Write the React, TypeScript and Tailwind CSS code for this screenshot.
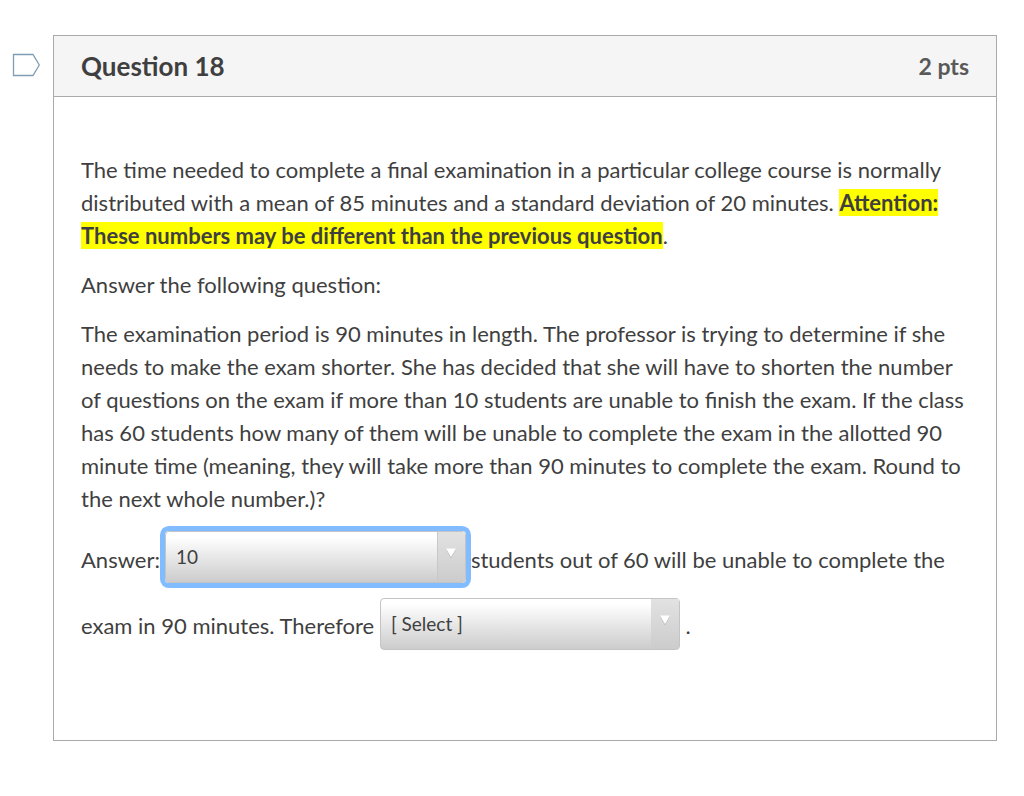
function QuestionSelect({ label, value, focused = false }: { label: string; value: string; focused?: boolean }) {
  return (
    <span
      className={
        focused
          ? 'relative inline-block w-[301px] h-[52px] rounded-sm align-middle mb-2.5 mx-[5px] leading-6 ring-5 ring-[#80bcff]'
          : 'relative inline-block w-[300px] h-[52px] rounded-sm align-middle mb-2.5 leading-6'
      }
    >
      <select
        aria-label={label}
        defaultValue={value}
        className="block w-full h-full appearance-none rounded-sm border border-[#c4c4c4] bg-linear-to-b from-white from-10% to-[#cccccc] pl-[10px] pr-10 text-[19px] leading-6 text-[#3f3f3f] outline-none"
      >
        <option>[ Select ]</option>
        <option>10</option>
      </select>
      <span
        className={
          focused
            ? 'pointer-events-none absolute inset-y-px right-px w-7 border-l border-[#c8c8c8] bg-linear-to-b from-[#e2e2e2] to-[#cccccc] flex justify-center pt-4'
            : 'pointer-events-none absolute inset-y-px right-px w-7 bg-linear-to-b from-[#e2e2e2] to-[#cccccc] flex justify-center pt-4'
        }
      >
        <svg width="10" height="10" viewBox="0 0 10 10" aria-hidden="true">
          <path d="M0.5 1.5L5 9.8L9.5 1.5" fill="none" stroke="#b4b4b4" strokeWidth="0.7" />
          <path d="M0 0.5H10L5 9Z" fill="#fff" />
        </svg>
      </span>
    </span>
  );
}

export default function App() {
  return (
    <main className="min-h-screen bg-white pt-[35px] pr-[27px] pb-14 pl-3 flex items-start gap-[13px] font-['Lato',sans-serif] text-[#3f3f3f]">
      {/* Flag marker */}
      <button type="button" aria-label="Flag question" className="mt-[18px] w-7 h-6 shrink-0">
        <svg width="28" height="24" viewBox="0 0 28 24" fill="none" aria-hidden="true">
          <path d="M1.5 1.5H21L27.3 12L21 22.5H1.5Z" stroke="#7f9db3" strokeWidth="1.3" />
        </svg>
      </button>

      <section className="flex-1 min-w-0 border border-[#aaaaaa]">
        <header className="flex items-center justify-between bg-[#f5f5f5] border-b border-[#aaaaaa] px-[27px] h-[61px]">
          <h1 className="text-[26px] font-bold">Question 18</h1>
          <span className="text-[23px] font-bold text-[#595959]">2 pts</span>
        </header>

        <div className="px-[27px] pt-14 pb-20 text-[22px] leading-[33px]">
          <p className="mb-4">
            The time needed to complete a final examination in a particular college course is normally
            distributed with a mean of 85 minutes and a standard deviation of 20 minutes.{' '}
            <strong className="bg-[#ffff00]">Attention: These numbers may be different than the previous question</strong>.
          </p>
          <p className="mb-4">Answer the following question:</p>
          <p>
            The examination period is 90 minutes in length. The professor is trying to determine if she
            needs to make the exam shorter. She has decided that she will have to shorten the number of
            questions on the exam if more than 10 students are unable to finish the exam. If the class has
            60 students how many of them will be unable to complete the exam in the allotted 90 minute time
            (meaning, they will take more than 90 minutes to complete the exam. Round to the next whole
            number.)?
          </p>
          <p className="mt-3 leading-[65px]">
            Answer:
            <QuestionSelect label="Number of students" value="10" focused />
            students out of 60 will be unable to complete the exam in 90 minutes. Therefore{' '}
            <QuestionSelect label="Conclusion" value="[ Select ]" /> .
          </p>
        </div>
      </section>
    </main>
  );
}
